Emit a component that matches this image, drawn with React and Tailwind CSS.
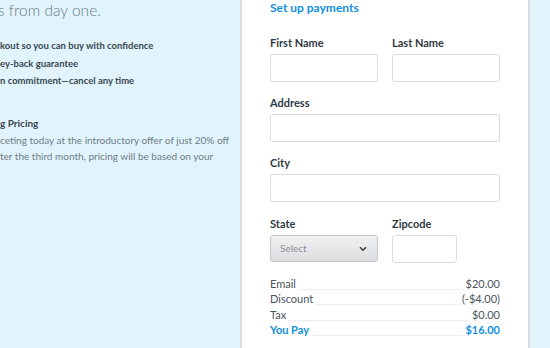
import React from "react";

const font = { fontFamily: "Lato, 'Open Sans', sans-serif" };

function Input({ className = "" }) {
  return <div className={`h-[28px] rounded-[3px] border border-[#dcdcdc] bg-white ${className}`} />;
}

function Label({ children }) {
  return <div className="text-[11px] font-bold text-[#2f3a44] leading-none mb-[6px]">{children}</div>;
}

function Row({ label, value, blue }) {
  return (
    <div className={`flex items-end h-[15.5px] text-[11px] leading-none ${blue ? "text-[#0f8fe0] font-bold" : "text-[#4a545d]"}`}>
      <span>{label}</span>
      <span className="flex-1 border-b border-[#eceef0] mx-[2px] mb-[-1px]" />
      <span>{value}</span>
    </div>
  );
}

export default function App() {
  return (
    <div className="w-[550px] h-[348px] bg-[#e1f4fc] flex overflow-hidden" style={font}>
      <div className="w-[240px] shrink-0 overflow-hidden">
        <div className="ml-[-2px] mt-[1px] text-[15.5px] font-light text-[#6b7984] leading-[18px] whitespace-nowrap">s from day one.</div>
        <div className="mt-[21px] flex flex-col gap-[5.5px] text-[9.5px] font-bold text-[#3a4650] leading-[12px] whitespace-nowrap">
          <div>kout so you can buy with confidence</div>
          <div>ey-back guarantee</div>
          <div>n commitment—cancel any time</div>
        </div>
        <div className="mt-[29px] text-[10px] font-bold text-[#3a4650] leading-[14px] whitespace-nowrap">g Pricing</div>
        <div className="mt-[2px] text-[10px] text-[#6f7d87] leading-[16px] whitespace-nowrap">
          <div>ceting today at the introductory offer of just 20% off</div>
          <div>ter the third month, pricing will be based on your</div>
        </div>
      </div>
      <div className="w-[290px] shrink-0 h-full bg-white border-x-2 border-[#d9dbe0] pl-[28px] pr-[28px]">
        <div className="pt-[1px] text-[12px] font-bold text-[#0f8fe0] leading-[14px]">Set up payments</div>
        <div className="mt-[22px] grid grid-cols-2 gap-x-[14px]">
          <div><Label>First Name</Label><Input /></div>
          <div><Label>Last Name</Label><Input /></div>
        </div>
        <div className="mt-[15px]"><Label>Address</Label><Input /></div>
        <div className="mt-[15px]"><Label>City</Label><Input /></div>
        <div className="mt-[16px] grid grid-cols-2 gap-x-[14px]">
          <div>
            <Label>State</Label>
            <div className="h-[27px] rounded-[3px] border border-[#c4c7cb] bg-gradient-to-b from-[#f0f1f2] to-[#dcdee0] flex items-center justify-between pl-[9px] pr-[10px]">
              <span className="text-[10px] text-[#8a9096]">Select</span>
              <svg width="8" height="6" viewBox="0 0 8 6"><path d="M1 1.2 L4 4.2 L7 1.2" fill="none" stroke="#3a4148" strokeWidth="1.6" /></svg>
            </div>
          </div>
          <div>
            <Label>Zipcode</Label>
            <Input className="w-[65px]" />
          </div>
        </div>
        <div className="mt-[10px] flex flex-col">
          <Row label="Email" value="$20.00" />
          <Row label="Discount" value="(-$4.00)" />
          <Row label="Tax" value="$0.00" />
          <Row label="You Pay" value="$16.00" blue />
        </div>
      </div>
      <div className="flex-1" />
    </div>
  );
}
